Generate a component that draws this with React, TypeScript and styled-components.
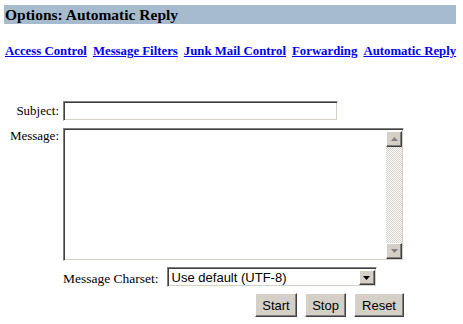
import styled, { createGlobalStyle } from "styled-components";

const GlobalStyle = createGlobalStyle`
  html, body {
    margin: 0;
    padding: 0;
    background: #ffffff;
  }
  body {
    font-family: "Liberation Serif", "Times New Roman", serif;
    color: #000000;
  }
`;

const Page = styled.div`
  width: 452px;
  padding: 5px 0 0 4px;
`;

const TitleBar = styled.h1`
  margin: 0;
  height: 19px;
  background-color: #a7bbcf;
  font-size: 15.5px;
  font-weight: bold;
  line-height: 20px;
  padding-left: 1px;
  white-space: nowrap;
`;

const Nav = styled.nav`
  display: flex;
  gap: 6px;
  margin-top: 20px;
  padding-left: 1px;
  line-height: 15px;
`;

const NavLink = styled.a`
  color: #0000ee;
  font-size: 12.8px;
  font-weight: bold;
  text-decoration: underline;
  white-space: nowrap;
  cursor: pointer;
`;

const Form = styled.form`
  display: grid;
  grid-template-columns: 55px 341px;
  column-gap: 4px;
  row-gap: 7px;
  margin-top: 42px;
`;

const Label = styled.label<{ $top?: boolean }>`
  font-size: 13px;
  text-align: right;
  align-self: ${(p) => (p.$top ? "start" : "center")};
  white-space: nowrap;
`;

const inset = `
  border: 1px solid;
  border-color: #808080 #ffffff #ffffff #808080;
  box-shadow: inset 1px 1px #404040, inset -1px -1px #d4d0c8;
  background: #ffffff;
`;

const TextInput = styled.input`
  ${inset}
  box-sizing: border-box;
  width: 275px;
  height: 20px;
  padding: 2px 3px;
  font-family: "Liberation Sans", Arial, sans-serif;
  font-size: 13px;
  outline: none;
`;

const AreaBox = styled.div`
  ${inset}
  box-sizing: border-box;
  height: 133px;
  display: flex;
  padding: 2px 1px 1px 2px;
`;

const Area = styled.textarea`
  flex: 1;
  border: none;
  resize: none;
  outline: none;
  padding: 2px;
  font-family: "Liberation Mono", "Courier New", monospace;
  font-size: 13px;
  background: transparent;
`;

const ScrollBar = styled.div`
  width: 16px;
  display: flex;
  flex-direction: column;
`;

const raised = `
  border: 1px solid;
  border-color: #ffffff #404040 #404040 #ffffff;
  box-shadow: inset -1px -1px #808080, inset 1px 1px #d4d0c8;
  background: #d4d0c8;
`;

const ScrollButton = styled.div`
  ${raised}
  box-sizing: border-box;
  width: 16px;
  height: 16px;
  display: flex;
  align-items: center;
  justify-content: center;
`;

const Track = styled.div`
  flex: 1;
  background: repeating-conic-gradient(#d4d0c8 0 25%, #ffffff 0 50%) 0 0 / 2px 2px;
`;

const Arrow = ({ dir, color }: { dir: "up" | "down"; color: string }) => (
  <svg width="7" height="4" viewBox="0 0 7 4">
    {dir === "up" ? (
      <polygon points="3.5,0 7,4 0,4" fill={color} />
    ) : (
      <polygon points="0,0 7,0 3.5,4" fill={color} />
    )}
  </svg>
);

const CharsetRow = styled.div`
  display: flex;
  align-items: center;
  gap: 8px;
  margin-top: -1px;
`;

const CharsetLabel = styled.label`
  font-size: 13.5px;
  padding-top: 4px;
  white-space: nowrap;
`;

const SelectBox = styled.div`
  ${inset}
  box-sizing: border-box;
  width: 210px;
  height: 20px;
  display: flex;
  align-items: stretch;
  padding: 2px 1px 1px 2px;
`;

const SelectValue = styled.span`
  flex: 1;
  font-family: "Liberation Sans", Arial, sans-serif;
  font-size: 13px;
  line-height: 15px;
  padding-left: 2px;
`;

const SelectButton = styled.div`
  ${raised}
  box-sizing: border-box;
  width: 16px;
  display: flex;
  align-items: center;
  justify-content: center;
`;

const Buttons = styled.div`
  display: flex;
  justify-content: flex-end;
  gap: 8px;
  margin-top: -1px;
`;

const Button = styled.button<{ $w: number }>`
  ${raised}
  box-sizing: border-box;
  width: ${(p) => p.$w}px;
  height: 24px;
  padding: 0;
  font-family: "Liberation Sans", Arial, sans-serif;
  font-size: 13px;
  color: #000000;
`;

const Spacer = styled.span``;

export default function App() {
  return (
    <Page>
      <GlobalStyle />
      <TitleBar>Options: Automatic Reply</TitleBar>
      <Nav>
        <NavLink>Access Control</NavLink>
        <NavLink>Message Filters</NavLink>
        <NavLink>Junk Mail Control</NavLink>
        <NavLink>Forwarding</NavLink>
        <NavLink>Automatic Reply</NavLink>
      </Nav>
      <Form>
        <Label>Subject:</Label>
        <TextInput type="text" />
        <Label $top>Message:</Label>
        <AreaBox>
          <Area />
          <ScrollBar>
            <ScrollButton>
              <Arrow dir="up" color="#808080" />
            </ScrollButton>
            <Track />
            <ScrollButton>
              <Arrow dir="down" color="#808080" />
            </ScrollButton>
          </ScrollBar>
        </AreaBox>
        <Spacer />
        <CharsetRow>
          <CharsetLabel>Message Charset:</CharsetLabel>
          <SelectBox>
            <SelectValue>Use default (UTF-8)</SelectValue>
            <SelectButton>
              <Arrow dir="down" color="#000000" />
            </SelectButton>
          </SelectBox>
        </CharsetRow>
        <Spacer />
        <Buttons>
          <Button type="button" $w={42}>Start</Button>
          <Button type="button" $w={41}>Stop</Button>
          <Button type="button" $w={50}>Reset</Button>
        </Buttons>
      </Form>
    </Page>
  );
}
